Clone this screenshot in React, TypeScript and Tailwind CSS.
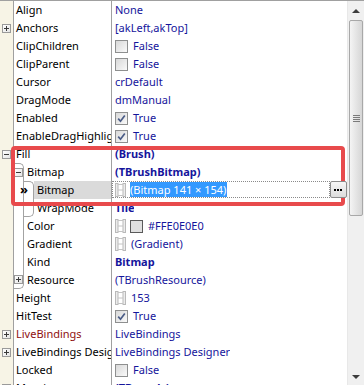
import React from 'react';

type Pos = 'first' | 'mid' | 'last';
interface Row {
  name: string;
  depth?: number;
  exp?: '+' | '-';
  g1?: Pos;
  g2?: Pos;
  red?: boolean;
  selected?: boolean;
  value: React.ReactNode;
}

const VC = 'text-[#15159c]';

function Expander({ sign }: { sign: '+' | '-' }) {
  return (
    <span className="relative flex h-[9px] w-[9px] shrink-0 items-center justify-center border border-[#9a9a9a] bg-gradient-to-br from-white to-[#e4e4e4]">
      <span className="h-px w-[5px] bg-[#3a3a3a]" />
      {sign === '+' && <span className="absolute left-[3px] top-[1px] h-[5px] w-px bg-[#3a3a3a]" />}
    </span>
  );
}

function Film() {
  return (
    <svg width="11" height="14" viewBox="0 0 11 14" className="shrink-0">
      <rect x="0.5" y="0.5" width="2.5" height="13" fill="#ececec" stroke="#b9b9b9" />
      <rect x="8" y="0.5" width="2.5" height="13" fill="#ececec" stroke="#b9b9b9" />
      <path d="M3 1.5h5M3 7h5M3 12.5h5" stroke="#c4c4c4" />
    </svg>
  );
}

function Check({ checked, label }: { checked: boolean; label: string }) {
  return (
    <span className="flex items-center">
      <span className="flex h-[13px] w-[13px] shrink-0 items-center justify-center border border-[#8e8f8f] bg-gradient-to-br from-[#d8d8d8] to-[#fafafa]">
        {checked && (
          <svg width="9" height="9" viewBox="0 0 9 9">
            <path d="M1.2 4.6 L3.5 7.2 L7.8 1.4" fill="none" stroke="#4a5c86" strokeWidth="1.7" />
          </svg>
        )}
      </span>
      <span className={`ml-[5px] ${VC}`}>{label}</span>
    </span>
  );
}

function Txt({ children, bold }: { children: React.ReactNode; bold?: boolean }) {
  return <span className={`${VC} ${bold ? 'font-bold' : ''} whitespace-nowrap`}>{children}</span>;
}

const rows: Row[] = [
  { name: 'Align', value: <Txt>None</Txt> },
  { name: 'Anchors', exp: '+', value: <Txt>[akLeft,akTop]</Txt> },
  { name: 'ClipChildren', value: <Check checked={false} label="False" /> },
  { name: 'ClipParent', value: <Check checked={false} label="False" /> },
  { name: 'Cursor', value: <Txt>crDefault</Txt> },
  { name: 'DragMode', value: <Txt>dmManual</Txt> },
  { name: 'Enabled', value: <Check checked label="True" /> },
  { name: 'EnableDragHighlight', value: <Check checked label="True" /> },
  { name: 'Fill', exp: '-', value: <Txt bold>(Brush)</Txt> },
  { name: 'Bitmap', depth: 1, exp: '-', g1: 'first', value: <Txt bold>(TBrushBitmap)</Txt> },
  { name: 'Bitmap', depth: 2, g1: 'mid', g2: 'first', selected: true, value: null },
  { name: 'WrapMode', depth: 2, g1: 'mid', g2: 'last', value: <Txt bold>Tile</Txt> },
  {
    name: 'Color',
    depth: 1,
    g1: 'mid',
    value: (
      <span className="flex items-center">
        <Film />
        <span className="ml-[4px] h-[13px] w-[13px] shrink-0 border border-[#5a5a5a] bg-[#e0e0e0]" />
        <span className={`ml-[5px] ${VC}`}>#FFE0E0E0</span>
      </span>
    ),
  },
  {
    name: 'Gradient',
    depth: 1,
    g1: 'mid',
    value: (
      <span className="flex items-center">
        <Film />
        <span className={`ml-[5px] ${VC}`}>(Gradient)</span>
      </span>
    ),
  },
  { name: 'Kind', depth: 1, g1: 'mid', value: <Txt bold>Bitmap</Txt> },
  { name: 'Resource', depth: 1, exp: '+', g1: 'last', value: <Txt>(TBrushResource)</Txt> },
  {
    name: 'Height',
    value: (
      <span className="flex items-center">
        <Film />
        <span className={`ml-[5px] ${VC}`}>153</span>
      </span>
    ),
  },
  { name: 'HitTest', value: <Check checked label="True" /> },
  { name: 'LiveBindings', exp: '+', red: true, value: <Txt>LiveBindings</Txt> },
  { name: 'LiveBindings Designer', exp: '+', value: <Txt>LiveBindings Designer</Txt> },
  { name: 'Locked', value: <Check checked={false} label="False" /> },
  { name: 'Margins', exp: '+', value: <Txt bold>(TBounds)</Txt> },
];

function guideClass(p: Pos | undefined) {
  let c = 'flex h-full w-[10px] shrink-0 items-center border-r border-[#a3a3a3]';
  if (p === 'first') c += ' border-t rounded-tr-[5px]';
  if (p === 'last') c += ' border-b rounded-br-[5px]';
  return c;
}

function PropRow({ r }: { r: Row }) {
  const depth = r.depth ?? 0;
  return (
    <div className="relative flex h-[18px] shrink-0 leading-[18px]">
      <div className="flex w-[14px] shrink-0 items-center border-r border-[#a0a0a0] bg-[#f7f4e6] pl-[2px]">
        {depth === 0 && r.exp && <Expander sign={r.exp} />}
      </div>
      <div className="flex w-[98px] shrink-0 overflow-hidden border-r border-[#a0a0a0]">
        {depth >= 1 && (
          <span className={guideClass(r.g1)}>{depth === 1 && r.exp && <Expander sign={r.exp} />}</span>
        )}
        {depth >= 2 && <span className={guideClass(r.g2)} />}
        <span
          className={`flex-1 overflow-hidden whitespace-nowrap ${depth === 0 ? 'pl-[2px]' : 'pl-[3px]'} ${
            r.selected ? 'bg-[#dadada]' : ''
          } ${r.red ? 'text-[#8f1010]' : 'text-black'}`}
        >
          {r.name}
        </span>
      </div>
      <div className="flex min-w-0 flex-1 items-center">
        {r.selected ? (
          <div className="flex h-[18px] w-full items-start">
            <div className="flex h-[17px] min-w-0 flex-1 items-center border border-dotted border-[#8a8a8a] pl-[2px]">
              <Film />
              <span className="ml-[4px] flex h-[15px] items-center whitespace-nowrap bg-[#3399ff] pr-[1px] text-white">
                (Bitmap 141 × 154)
              </span>
            </div>
            <div className="relative z-10 flex h-[17px] w-[17px] shrink-0 items-center justify-center rounded-[2px] border border-[#8c8c8c] bg-gradient-to-b from-[#f7f7f7] to-[#dcdcdc] pr-[1px]">
              <span className="flex gap-[1px]">
                <span className="h-[2px] w-[2px] bg-black" />
                <span className="h-[2px] w-[2px] bg-black" />
                <span className="h-[2px] w-[2px] bg-black" />
              </span>
            </div>
          </div>
        ) : (
          <div className="overflow-hidden pl-[3px]">{r.value}</div>
        )}
      </div>
      {r.selected && (
        <span className="absolute left-[20px] top-0 text-[13px] font-bold leading-[17px] text-black">»</span>
      )}
    </div>
  );
}

export default function App() {
  return (
    <div
      className="relative flex h-[385px] w-[364px] overflow-hidden border-t border-[#a0a0a0] bg-white text-[11px]"
      style={{ fontFamily: '"Noto Sans", "DejaVu Sans", sans-serif' }}
    >
      <div className="flex min-w-0 flex-1 flex-col overflow-hidden">
        {rows.map((r, i) => (
          <PropRow key={i} r={r} />
        ))}
      </div>
      <div className="flex w-[17px] shrink-0 flex-col border-l border-[#e8e8e8] bg-[#f0f0f0]">
        <div className="flex h-[19px] shrink-0 items-center justify-center">
          <span className="h-0 w-0 border-x-[4px] border-b-[4px] border-x-transparent border-b-[#3c3c3c]" />
        </div>
        <div className="mx-[1px] flex h-[196px] shrink-0 flex-col items-center justify-center gap-[1px] rounded-[2px] border border-[#a8a8a8] bg-gradient-to-r from-[#f4f4f4] to-[#d6d6d6]">
          <span className="h-px w-[7px] bg-[#7a7a7a]" />
          <span className="h-px w-[7px] bg-[#7a7a7a]" />
          <span className="h-px w-[7px] bg-[#7a7a7a]" />
          <span className="h-px w-[7px] bg-[#7a7a7a]" />
        </div>
        <div className="flex-1" />
        <div className="flex h-[17px] shrink-0 items-center justify-center">
          <span className="h-0 w-0 border-x-[4px] border-t-[4px] border-x-transparent border-t-[#3c3c3c]" />
        </div>
      </div>
      <div className="pointer-events-none absolute left-[11px] top-[145px] h-[60px] w-[334px] rounded-[4px] border-[4px] border-[#e84a4c]" />
    </div>
  );
}
